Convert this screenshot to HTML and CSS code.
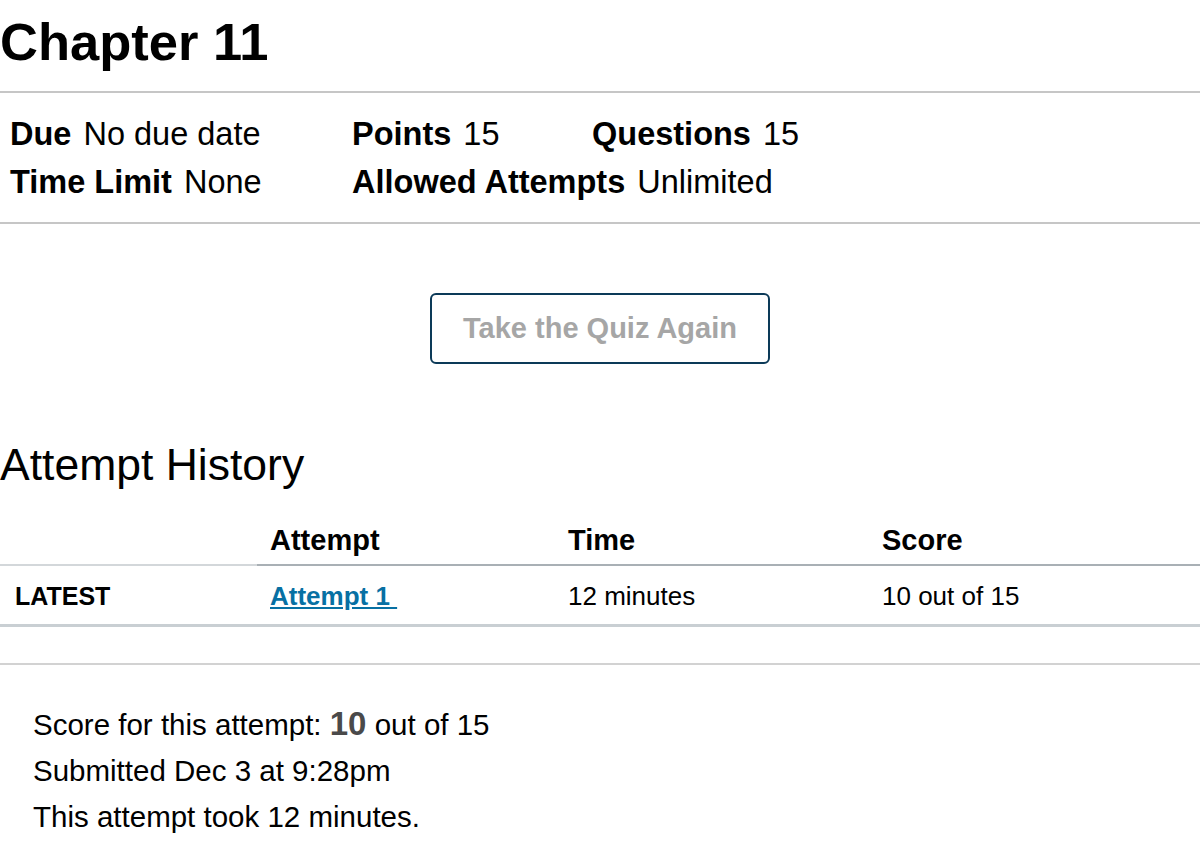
FILE: index.html
```html
<!DOCTYPE html>
<html lang="en">
<head>
<meta charset="utf-8">
<title>Chapter 11</title>
<link rel="stylesheet" href="styles.css">
</head>
<body>
<main class="page">
  <h1 class="title">Chapter 11</h1>
  <hr class="rule">
  <div class="details">
    <div class="detail"><span class="label">Due</span><span class="value">No due date</span></div>
    <div class="detail"><span class="label">Points</span><span class="value">15</span></div>
    <div class="detail"><span class="label">Questions</span><span class="value">15</span></div>
    <div class="detail"><span class="label">Time Limit</span><span class="value">None</span></div>
    <div class="detail wide"><span class="label">Allowed Attempts</span><span class="value">Unlimited</span></div>
  </div>
  <hr class="rule">
  <div class="actions">
    <button class="btn" type="button">Take the Quiz Again</button>
  </div>
  <h2 class="section-title">Attempt History</h2>
  <div class="history">
    <div class="row head">
      <div class="cell first"></div>
      <div class="cell">Attempt</div>
      <div class="cell">Time</div>
      <div class="cell">Score</div>
    </div>
    <div class="row body">
      <div class="cell first latest">LATEST</div>
      <div class="cell"><a class="attempt-link" href="#">Attempt 1 </a></div>
      <div class="cell">12 minutes</div>
      <div class="cell">10 out of 15</div>
    </div>
  </div>
  <hr class="rule light">
  <div class="summary">
    <div class="line">Score for this attempt: <span class="score">10</span> out of 15</div>
    <div class="line">Submitted Dec 3 at 9:28pm</div>
    <div class="line">This attempt took 12 minutes.</div>
  </div>
</main>
</body>
</html>
```

FILE: styles.css
```css
html, body {
  margin: 0;
  padding: 0;
  background: #ffffff;
}

body {
  font-family: "Liberation Sans", Arial, Helvetica, sans-serif;
  color: #000000;
}

.page {
  width: 1200px;
}

.title {
  margin: 0;
  padding-top: 10px;
  font-size: 52.5px;
  line-height: 64px;
  font-weight: bold;
}

.rule {
  margin: 17px 0 0 0;
  border: 0;
  height: 2px;
  background: #c6c6c6;
}

.details {
  display: grid;
  grid-template-columns: 342px 240px auto;
  padding: 17px 0 16px 10px;
  font-size: 32.5px;
  line-height: 48px;
}

.details .wide {
  grid-column: span 2;
}

.detail {
  display: flex;
  gap: 12px;
  white-space: nowrap;
}

.label {
  font-weight: bold;
}

.details + .rule {
  margin-top: 0;
}

.actions {
  display: flex;
  justify-content: center;
  padding-top: 69px;
}

.btn {
  height: 71px;
  padding: 0 31px;
  border: 2px solid #0c3a58;
  border-radius: 6px;
  background: #ffffff;
  color: #a6a6a6;
  font-family: "Liberation Sans", Arial, sans-serif;
  font-size: 29px;
  font-weight: bold;
}

.section-title {
  margin: 76px 0 0 0;
  font-size: 44.5px;
  line-height: 50px;
  font-weight: normal;
}

.history {
  display: flex;
  flex-direction: column;
}

.row {
  display: grid;
  grid-template-columns: 257px 298px 314px 1fr;
}

.cell {
  padding-left: 13px;
}

.cell.first {
  padding-left: 15px;
}

.row.head {
  font-size: 29px;
  font-weight: bold;
  line-height: 40px;
}

.row.head .cell {
  padding-top: 30px;
  padding-bottom: 4px;
  border-bottom: 2px solid #a9b0b5;
}

.row.head .cell.first {
  border-bottom-color: #d3d7da;
}

.row.body {
  font-size: 26px;
  line-height: 36px;
  border-bottom: 3px solid #c9cfd3;
}

.row.body .cell {
  padding-top: 12px;
  padding-bottom: 10px;
}

.latest {
  font-weight: bold;
  font-size: 25px;
}

.attempt-link {
  color: #0770a3;
  font-weight: bold;
  font-size: 26px;
  text-decoration: underline;
  white-space: pre;
}

.rule.light {
  margin-top: 36px;
  background: #d2d2d2;
}

.summary {
  padding: 37px 0 0 33px;
  font-size: 29.5px;
  line-height: 46px;
}

.score {
  font-size: 33px;
  font-weight: bold;
  color: #4a4a4a;
  line-height: 1;
}
```
